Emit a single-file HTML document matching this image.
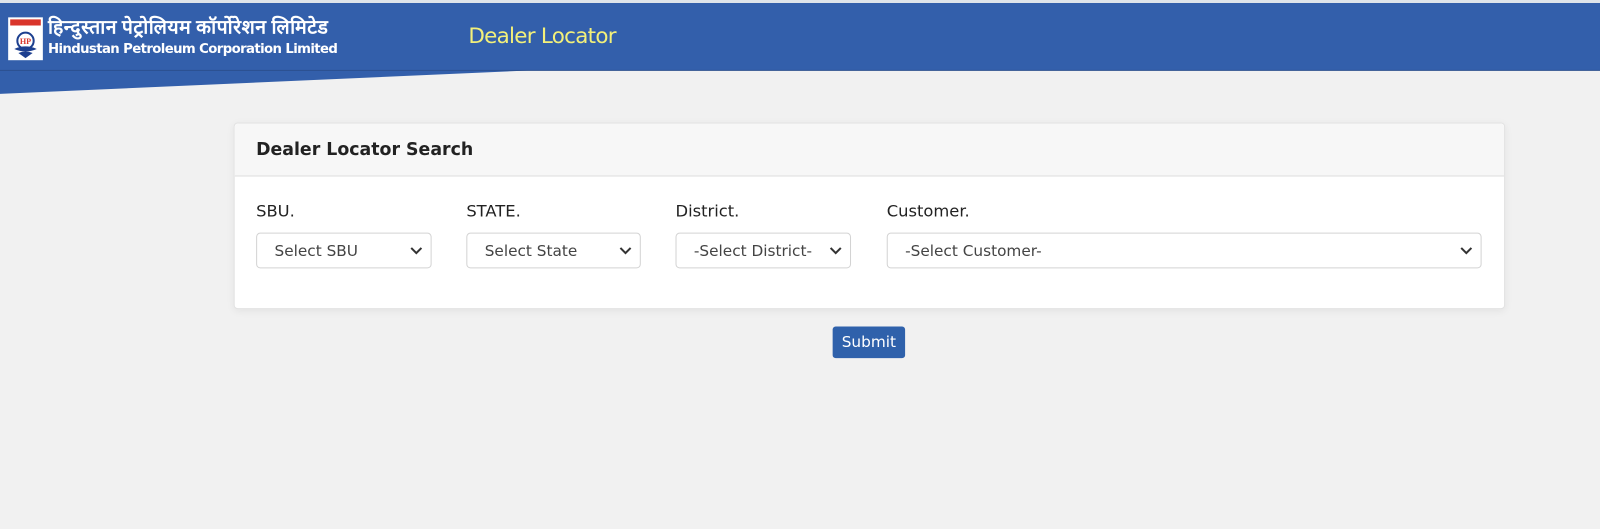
<!DOCTYPE html>
<html><head><meta charset="utf-8"><style>
body{margin:0;width:1600px;height:528px;background:#f1f1f1;font-family:"DejaVu Sans",Verdana,sans-serif;position:relative;overflow:hidden}
#w{position:absolute;left:0;top:0;width:1568px;height:518px;transform:scale(1.0204);transform-origin:0 0}
.top{position:absolute;left:0;top:0;width:1600px;height:3px;background:#dfe4ea}
svg.hdr{position:absolute;left:0;top:3px}
.logo{position:absolute;left:8px;top:17px;width:34px;height:42px;background:#fff}
.logo .r{position:absolute;left:2px;top:2px;width:30px;height:6px;background:#d9352b}
.hi{position:absolute;left:47px;top:12px;color:#fff;font:bold 19px "Noto Sans CJK SC","DejaVu Sans",sans-serif;white-space:nowrap;letter-spacing:0.5px}
.en{position:absolute;left:47px;top:41px;color:#fff;font:bold 13px "DejaVu Sans",sans-serif;letter-spacing:-0.6px;white-space:nowrap}
.title{position:absolute;left:459px;top:23px;color:#f3f07a;font:21px "DejaVu Sans",sans-serif;letter-spacing:-0.7px}
.card{position:absolute;left:229px;top:120px;width:1244px;height:181px;background:#fff;border:1px solid #e2e2e2;border-radius:4px;box-shadow:0 2px 8px rgba(0,0,0,.06)}
.ch{height:51px;background:#f7f7f7;border-bottom:1px solid #ddd;border-radius:4px 4px 0 0}
.ch span{position:absolute;left:21px;top:16px;font-weight:bold;font-size:17px;color:#222}
.lbl{position:absolute;top:197px;font-size:16px;color:#222}
.sel{position:absolute;top:228px;height:35px;border:1px solid #d3d3d3;border-radius:4px;background:#fff;box-sizing:border-box;font-size:15px;color:#444;padding:8px 0 0 17px}
.sel svg{position:absolute;right:8px;top:13px}
.btn{position:absolute;left:816px;top:320px;width:71px;height:31px;background:#2f61ab;border-radius:3px;color:#fff;font-size:15px;text-align:center;line-height:30px}
</style></head><body><div id="w">
<div class="top"></div>
<svg class="hdr" width="1600" height="92"><polygon points="0,0 1600,0 1600,66 520,66 0,89" fill="#335fab"/><line x1="0" y1="66" x2="1600" y2="66" stroke="#2b4f8e" stroke-width="1"/></svg>
<div class="logo"><div class="r"></div>
<svg width="34" height="42" style="position:absolute;left:0;top:0"><circle cx="17" cy="23" r="8" fill="#fff" stroke="#1d3f8f" stroke-width="2"/><text x="17" y="26" font-size="8" font-weight="bold" fill="#d9352b" text-anchor="middle" font-family="Liberation Serif">HP</text><path d="M6 31 Q17 26 28 31 Q17 36 6 31Z M10 35 Q17 32 24 35 L17 40Z" fill="#1d3f8f"/></svg></div>
<div class="hi">हिन्दुस्तान पेट्रोलियम कॉर्पोरेशन लिमिटेड</div>
<div class="en">Hindustan Petroleum Corporation Limited</div>
<div class="title">Dealer Locator</div>
<div class="card"><div class="ch"><span>Dealer Locator Search</span></div></div>
<div class="lbl" style="left:251px">SBU.</div>
<div class="lbl" style="left:457px">STATE.</div>
<div class="lbl" style="left:662px">District.</div>
<div class="lbl" style="left:869px">Customer.</div>
<div class="sel" style="left:251px;width:172px">Select SBU<svg width="12" height="8"><path d="M1 1l5 5 5-5" fill="none" stroke="#333" stroke-width="2"/></svg></div>
<div class="sel" style="left:457px;width:171px">Select State<svg width="12" height="8"><path d="M1 1l5 5 5-5" fill="none" stroke="#333" stroke-width="2"/></svg></div>
<div class="sel" style="left:662px;width:172px">-Select District-<svg width="12" height="8"><path d="M1 1l5 5 5-5" fill="none" stroke="#333" stroke-width="2"/></svg></div>
<div class="sel" style="left:869px;width:583px">-Select Customer-<svg width="12" height="8"><path d="M1 1l5 5 5-5" fill="none" stroke="#333" stroke-width="2"/></svg></div>
<div class="btn">Submit</div>
</div></body></html>
